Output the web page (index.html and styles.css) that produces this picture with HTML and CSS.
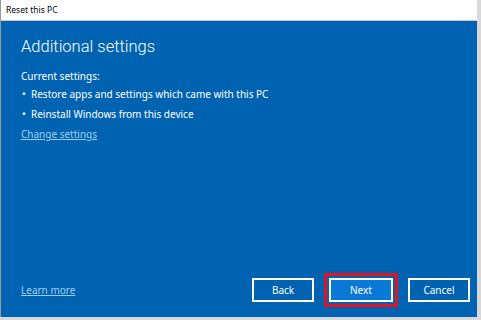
FILE: index.html
```html
<!DOCTYPE html>
<html lang="en">

<head>
    <meta charset="UTF-8">
    <meta name="viewport" content="width=device-width, initial-scale=1.0">
    <title>Reset this PC</title>

    <link rel="stylesheet" href="styles.css">
</head>

<body>
    <div class="window">
        <div class="title-bar">Reset this PC</div>
        <div class="main">
            <div class="content">
                <h1>Additional settings</h1>
                <p class="label">Current settings:</p>
                <ul class="settings-list">
                    <li>Restore apps and settings which came with this PC</li>
                    <li>Reinstall Windows from this device</li>
                </ul>
                <a href="#" class="link">Change settings</a>
            </div>
            <div class="footer">
                <a href="#" class="link">Learn more</a>
                <div class="buttons">
                    <button type="button" class="btn">Back</button>
                    <span class="highlight">
                        <button type="button" class="btn btn-primary">Next</button>
                    </span>
                    <button type="button" class="btn">Cancel</button>
                </div>
            </div>
        </div>
    </div>
</body>

</html>
```

FILE: styles.css
```css
body {
    margin: 0;
    padding: 0;
    background-color: #d9d9d9;
    font-family: "Noto Sans", Arial, sans-serif;
    width: 481px;
    height: 320px;
    overflow: hidden;
}

.window {
    width: 476px;
    height: 317px;
    border-left: 1px solid #9a9a9a;
    display: flex;
    flex-direction: column;
}

.title-bar {
    height: 20px;
    line-height: 20px;
    background-color: white;
    border-bottom: 1px solid #c8c8c8;
    color: #000;
    font-size: 8.5px;
    padding-left: 5px;
}

.main {
    flex: 1;
    background-color: #0063b1;
    color: white;
    display: flex;
    flex-direction: column;
}

.content {
    padding: 13px 20px 0 20px;
    display: flex;
    flex-direction: column;
    align-items: flex-start;
}

.content h1 {
    margin: 0;
    font-family: Roboto, Lato, sans-serif;
    font-weight: 300;
    font-size: 16.5px;
    line-height: 26px;
}

.label {
    margin: 8px 0 0 0;
    font-size: 10px;
    line-height: 16px;
}

.settings-list {
    margin: 0;
    padding: 0;
    list-style: none;
}

.settings-list li {
    font-size: 10px;
    line-height: 20px;
    padding-left: 10px;
    position: relative;
}

/* bullet dot */
.settings-list li::before {
    content: "\2022";
    position: absolute;
    left: 1px;
}

.link {
    color: #9fcdf2;
    font-size: 10px;
    line-height: 20px;
    text-decoration: underline;
}

.footer {
    margin-top: auto;
    padding: 0 7px 10px 20px;
    display: flex;
    justify-content: space-between;
    align-items: center;
}

.buttons {
    display: flex;
    align-items: center;
    gap: 10px;
}

.btn {
    width: 62px;
    height: 24px;
    background-color: transparent;
    border: 2px solid white;
    color: white;
    font-family: "Noto Sans", Arial, sans-serif;
    font-size: 10px;
    padding: 0;
}

.highlight {
    display: flex;
    border: 3px solid #e3121e;
    padding: 2px;
}

.btn-primary {
    width: 64px;
    background-color: #0a78d6;
}
```
